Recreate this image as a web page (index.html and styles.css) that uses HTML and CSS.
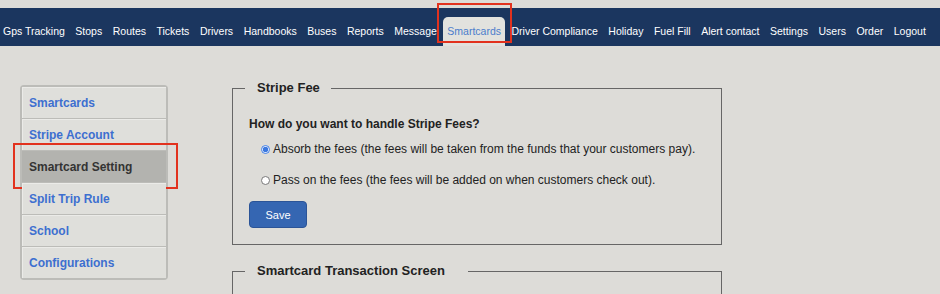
FILE: index.html
```html
<!DOCTYPE html>
<html>
<head>
<meta charset="utf-8">
<link rel="stylesheet" href="styles.css">
</head>
<body>
<nav class="topnav">
  <a class="nav-link">Gps Tracking</a>
  <a class="nav-link">Stops</a>
  <a class="nav-link">Routes</a>
  <a class="nav-link">Tickets</a>
  <a class="nav-link">Drivers</a>
  <a class="nav-link">Handbooks</a>
  <a class="nav-link">Buses</a>
  <a class="nav-link">Reports</a>
  <a class="nav-link">Message</a>
  <a class="nav-link active">Smartcards<span class="mark mark-tab"></span></a>
  <a class="nav-link">Driver Compliance</a>
  <a class="nav-link">Holiday</a>
  <a class="nav-link">Fuel Fill</a>
  <a class="nav-link">Alert contact</a>
  <a class="nav-link">Settings</a>
  <a class="nav-link">Users</a>
  <a class="nav-link">Order</a>
  <a class="nav-link">Logout</a>
</nav>
<div class="main">
  <aside class="sidebar">
    <a class="side-item">Smartcards</a>
    <a class="side-item">Stripe Account</a>
    <a class="side-item active">Smartcard Setting<span class="mark mark-side"></span></a>
    <a class="side-item">Split Trip Rule</a>
    <a class="side-item">School</a>
    <a class="side-item">Configurations</a>
  </aside>
  <section class="content">
    <fieldset class="panel">
      <legend class="panel-title">Stripe Fee</legend>
      <p class="question">How do you want to handle Stripe Fees?</p>
      <label class="radio-row first"><input type="radio" name="fee" class="radio" checked>Absorb the fees (the fees will be taken from the funds that your customers pay).</label>
      <label class="radio-row second"><input type="radio" name="fee" class="radio">Pass on the fees (the fees will be added on when customers check out).</label>
      <button class="save-btn">Save</button>
    </fieldset>
    <fieldset class="panel panel-second">
      <legend class="panel-title wide">Smartcard Transaction Screen</legend>
    </fieldset>
  </section>
</div>
</body>
</html>
```

FILE: styles.css
```css
html, body {
  margin: 0;
  padding: 0;
}
body {
  background: #dddcd8;
  padding-top: 8px;
  font-family: "Liberation Sans", Arial, Helvetica, sans-serif;
  color: #222;
  width: 940px;
  height: 286px;
  overflow: hidden;
}
.topnav {
  background: #1b365f;
  height: 38px;
  box-sizing: border-box;
  padding: 9px 0 0 0;
  margin-left: -1px;
  display: flex;
  gap: 2.5px;
  white-space: nowrap;
}
.nav-link {
  position: relative;
  display: block;
  height: 29px;
  line-height: 29px;
  padding: 0 4px;
  font-size: 10.5px;
  color: #fff;
}
.nav-link.active {
  background: #e2e2de;
  color: #4b7dcc;
  border-radius: 5px 5px 0 0;
}
.mark {
  position: absolute;
  border: 2px solid #e2321e;
  box-sizing: border-box;
  pointer-events: none;
}
.mark-tab {
  left: -6px;
  top: -14px;
  width: 75px;
  height: 40px;
}
.main {
  display: flex;
  align-items: flex-start;
  padding-left: 20px;
  margin-top: 34px;
}
.sidebar {
  margin-top: 5px;
  width: 148px;
  box-sizing: border-box;
  border: 2px solid #bcbcb8;
  border-radius: 4px;
  background: #bcbcb8;
  display: flex;
  flex-direction: column;
  gap: 1px;
}
.side-item {
  position: relative;
  display: block;
  height: 31px;
  line-height: 30px;
  box-sizing: border-box;
  padding-left: 6px;
  background: #dfdfdb;
  border-top: 1px solid #ebebe8;
  border-left: 1px solid #ebebe8;
  font-size: 12px;
  font-weight: bold;
  color: #3d6fd0;
}
.side-item.active {
  background: #b3b3af;
  color: #333;
  border-color: #b3b3af;
}
.mark-side {
  left: -10px;
  top: -9px;
  width: 165px;
  height: 46px;
}
.content {
  margin-left: 64px;
  width: 490px;
}
.panel {
  margin: 0;
  border: 1px solid #666;
  padding: 0 16px 16px 16px;
  box-sizing: border-box;
  width: 490px;
}
.panel-title {
  margin-left: -4px;
  padding: 0 11px 0 12px;
  font-size: 13px;
  line-height: 16px;
  margin-top: 1px;
  font-weight: bold;
  color: #222;
}
.panel-title.wide {
  padding-right: 17px;
  padding-right: 23px;
}
.question {
  margin: 21px 0 0 0;
  font-size: 12px;
  line-height: 14px;
  font-weight: bold;
  color: #222;
}
.radio-row {
  display: flex;
  align-items: center;
  height: 20px;
  padding-left: 11px;
  font-size: 12px;
  color: #222;
}
.radio-row.first {
  margin-top: 8px;
}
.radio-row.second {
  margin-top: 11px;
}
.radio {
  width: 9px;
  height: 9px;
  margin: 0 3px 0 1px;
  accent-color: #3b78e0;
}
.save-btn {
  display: block;
  margin-top: 11px;
  width: 58px;
  height: 27px;
  background: #3566b2;
  border: 1px solid #2b5497;
  border-radius: 4px;
  color: #fff;
  font-family: "Liberation Sans", Arial, sans-serif;
  font-size: 11px;
  padding: 0;
}
.panel-second {
  margin-top: 18px;
  height: 60px;
}
```
